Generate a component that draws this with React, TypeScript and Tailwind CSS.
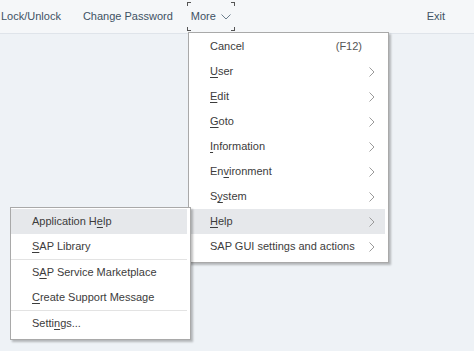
const font = { fontFamily: '"Liberation Sans", Arial, sans-serif' };

type Item = { label: React.ReactNode; right?: "chevron" | string; active?: boolean; divider?: boolean };

const U = ({ children }: { children: string }) => <span className="underline underline-offset-2">{children}</span>;

const Chevron = () => (
  <svg width="6" height="10" viewBox="0 0 6 10" className="text-[#9a9a9a]">
    <path d="M0.5 0.5 L5 5 L0.5 9.5" fill="none" stroke="currentColor" strokeWidth="1" />
  </svg>
);

const mainItems: Item[] = [
  { label: "Cancel", right: "(F12)" },
  { label: <><U>U</U>ser</>, right: "chevron" },
  { label: <><U>E</U>dit</>, right: "chevron" },
  { label: <><U>G</U>oto</>, right: "chevron" },
  { label: <><U>I</U>nformation</>, right: "chevron" },
  { label: <>En<U>v</U>ironment</>, right: "chevron" },
  { label: <>S<U>y</U>stem</>, right: "chevron" },
  { label: <><U>H</U>elp</>, right: "chevron", active: true },
  { label: "SAP GUI settings and actions", right: "chevron" },
];

const helpItems: Item[] = [
  { label: <>Application H<U>e</U>lp</>, active: true },
  { label: <><U>S</U>AP Library</>, divider: true },
  { label: <>S<U>A</U>P Service Marketplace</> },
  { label: <><U>C</U>reate Support Message</>, divider: true },
  { label: <>Setti<U>n</U>gs...</> },
];

const Corner = ({ className }: { className: string }) => (
  <span className={`absolute w-[4px] h-[4px] border-[#555] ${className}`} />
);

export default function App() {
  return (
    <div className="relative w-[474px] h-[351px] overflow-hidden bg-[#eef2f6] text-[11px]" style={font}>
      <div className="h-[34px] bg-[#f5f7f9] border-b border-[#dfe4ea] flex items-center text-[#3e5264] text-[11px]">
        <span className="ml-[1px]">Lock/Unlock</span>
        <span className="ml-[22px]">Change Password</span>
        <span className="relative ml-[14px] flex items-center gap-[5px] px-[4px] py-[6px]">
          <Corner className="left-0 top-0 border-l border-t" />
          <Corner className="right-0 top-0 border-r border-t" />
          <Corner className="left-0 bottom-0 border-l border-b" />
          <Corner className="right-0 bottom-0 border-r border-b" />
          More
          <svg width="10" height="6" viewBox="0 0 10 6">
            <path d="M0.5 0.5 L5 5 L9.5 0.5" fill="none" stroke="#6b7d8c" strokeWidth="1" />
          </svg>
        </span>
        <span className="ml-auto mr-[29px]">Exit</span>
      </div>

      <div className="absolute left-[188px] top-[32px] w-[201px] bg-white border border-[#a9a9a9] shadow-[2px_2px_2px_rgba(0,0,0,0.25)] pt-[1px] pb-[3px] pr-[3px] text-[#3c3c3c]">
        {mainItems.map((it, i) => (
          <div key={i} className={`h-[25px] flex items-center pl-[21px] pr-[10px] ${it.active ? "bg-[#e6e8eb]" : ""}`}>
            <span className="flex-1">{it.label}</span>
            {it.right === "chevron" ? <Chevron /> : <span className="text-[#555] mr-[13px]">{it.right}</span>}
          </div>
        ))}
      </div>

      <div className="absolute left-[10px] top-[207px] w-[181px] bg-white border border-[#a9a9a9] shadow-[2px_2px_2px_rgba(0,0,0,0.25)] pt-[1px] pb-[3px] pr-[3px] text-[#3c3c3c]">
        {helpItems.map((it, i) => (
          <div key={i} className={it.divider ? "border-b border-[#e3e3e3]" : ""}>
            <div className={`h-[25px] flex items-center pl-[21px] ${it.active ? "bg-[#e6e8eb]" : ""}`}>{it.label}</div>
          </div>
        ))}
      </div>
    </div>
  );
}
